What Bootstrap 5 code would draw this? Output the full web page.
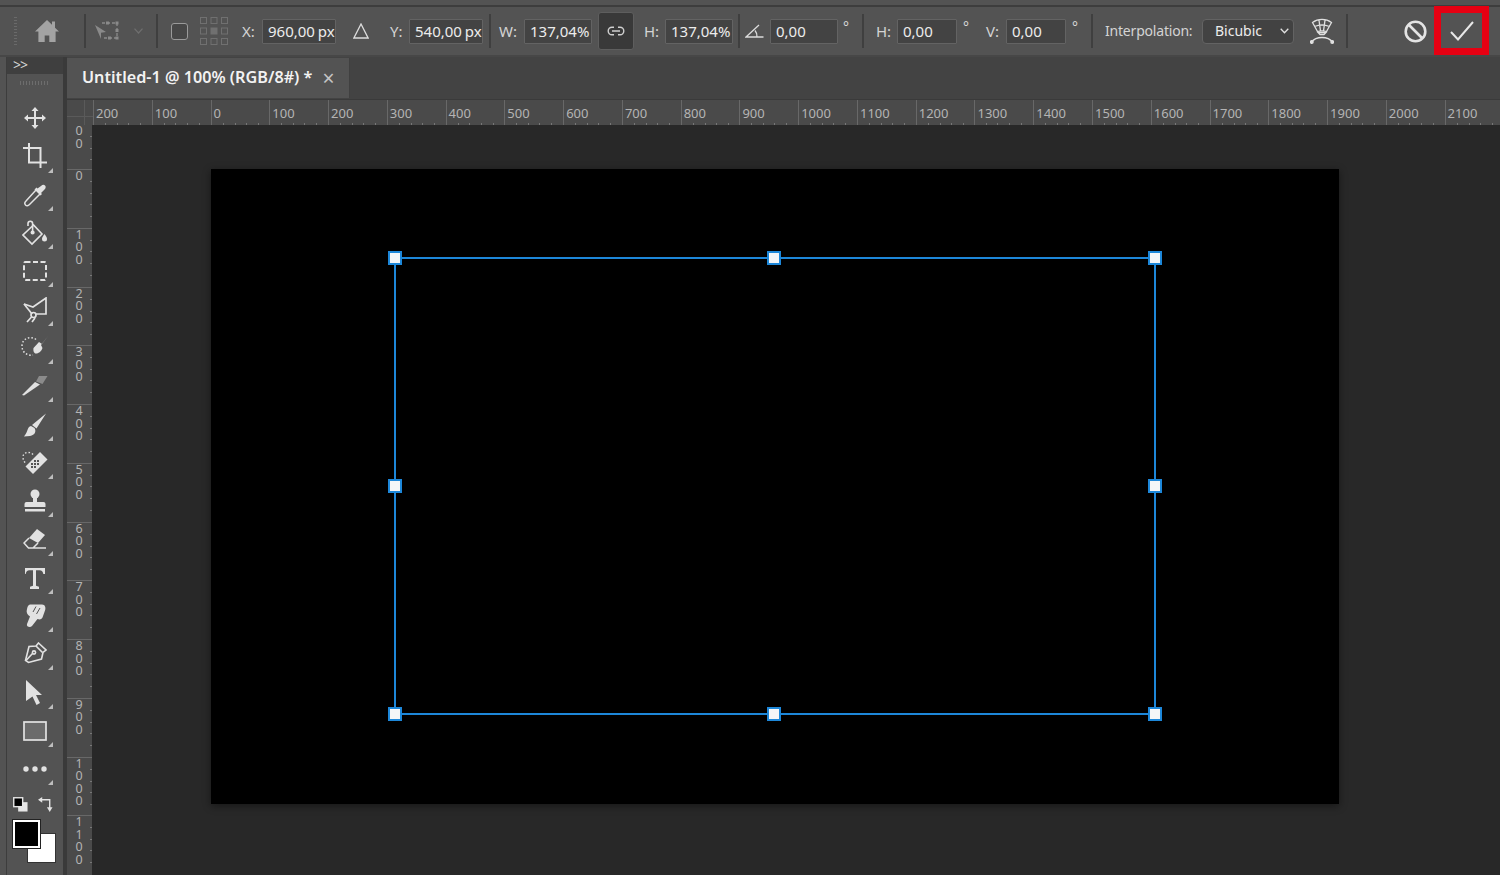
<!DOCTYPE html>
<html lang="en">
<head>
<meta charset="utf-8">
<title>Untitled-1 @ 100% (RGB/8#) *</title>
<link href="https://cdn.jsdelivr.net/npm/bootstrap@5.3.0/dist/css/bootstrap.min.css" rel="stylesheet">
<style>
html,body{height:875px;width:1500px;overflow:hidden}
body{background:#535353;color:#dedede;font-family:"Noto Sans","Open Sans",sans-serif;font-size:15px;line-height:1.2}
svg{display:block;flex:none}
.top-strip{height:7px;flex:none;background:#535353;border-bottom:2px solid #3d3d3d}
.optbar{height:50px;flex:none;padding-left:14px;background:#535353;border-bottom:2px solid #474747}
.grip{width:3px;height:28px;background:repeating-linear-gradient(#6a6a6a 0 1px,transparent 1px 3px)}
.sep{width:2px;height:34px;background:#3f3f3f;flex:none}
.field{height:25px;background:#434343;border:1px solid #636363;color:#ececec;padding:0 0 0 5px;display:flex;align-items:center;overflow:hidden;white-space:pre;word-spacing:-1px;flex:none;border-radius:1px}
.w74{width:74px}.w68{width:68px}.w60{width:60px}
.lbl{color:#d4d4d4;flex:none;white-space:nowrap}
.lx{width:14px}.ly{width:13px}.lw{width:19px}.lh{width:15px}
.lint{width:88px;font-size:14px;letter-spacing:-.2px}
.deg{flex:none;color:#d8d8d8;width:8px;margin-top:-8px;font-size:14px}
.linkbtn{width:36px;height:38px;background:#393939;border:1px solid #5e5e5e;border-radius:3px;flex:none}
.check{width:17px;height:17px;border:1.5px solid #9a9a9a;border-radius:3px;background:#474747;flex:none}
.selectbox{width:92px;height:25px;background:#424242;border:1px solid #636363;border-radius:4px;padding:0 4px 0 12px;flex:none;color:#ececec;font-size:14px}
.commit{width:55px;height:49px;border:7px solid #e60012;flex:none;margin-top:-1px}
.m5{margin-left:5px}.m6{margin-left:6px}.m7{margin-left:7px}.m8{margin-left:8px}.m9{margin-left:9px}.m10{margin-left:10px}.m11{margin-left:11px}.m12{margin-left:12px}.m13{margin-left:13px}.m14{margin-left:14px}.m15{margin-left:15px}.m16{margin-left:16px}.m17{margin-left:17px}.m18{margin-left:18px}.m21{margin-left:21px}.m25{margin-left:25px}.m56{margin-left:56px}
.edge{width:6px;background:#535353;flex:none}
.toolbar{width:57px;flex:none;background:#535353;border-left:1px solid #3d3d3d}
.collapse-strip{height:17px;background:#3f3f3f;color:#d5d5d5;font-size:14px;line-height:15px;padding-left:6px;letter-spacing:-1px}
.tool-grip{height:4px;width:30px;margin:7px 0 14px 13px;background:repeating-linear-gradient(90deg,#6d6d6d 0 1px,transparent 1px 3px)}
.tool{height:38.3px;position:relative;color:#e2e2e2;flex:none}
.tool.more::after{content:"";position:absolute;right:10px;bottom:3px;border-style:solid;border-width:0 0 5px 5px;border-color:transparent transparent #bdbdbd transparent}
.swaps{height:20px;margin-top:6px;padding-left:6px}
.colors{height:42px;width:42px;margin:6px 0 0 6px;position:relative}
.fg{width:27px;height:28px;background:#000;border:2px solid #fff;outline:1px solid #222;position:absolute;left:0;top:0;z-index:1}
.bg{width:27px;height:28px;background:#fff;outline:1px solid #333;position:absolute;left:15px;top:14px}
.gutter{width:4px;flex:none;background:#3a3a3a}
.doc{min-width:0;background:#282828}
.tabbar{height:43px;flex:none;background:#434343;padding-top:1px;border-bottom:1px solid #3a3a3a}
.tab{width:283px;height:40px;background:#535353;color:#f2f2f2;font-weight:600;font-size:16.2px;padding:0 0 0 15px;white-space:nowrap;border-right:1px solid #404040}
.tab .x{color:#c4c4c4;font-weight:400;font-size:21px;line-height:21px;margin-left:10px}
.hruler{height:25px;flex:none;background-color:#4a4a4a;color:#b4b4b4;font-size:13px;overflow:hidden}
.corner{width:26px;flex:none;background:linear-gradient(#5a5a5a,#5a5a5a) 17px 0/1px 100% no-repeat,linear-gradient(#5a5a5a,#5a5a5a) 0 16px/100% 1px no-repeat,#4a4a4a}
.hcell{flex:0 0 58.77px;border-left:1px solid #686868;padding:6px 0 0 2px;background:repeating-linear-gradient(90deg,transparent 0 10.75px,#777 10.75px 11.75px) 0 100%/100% 2px no-repeat}
.stage{min-height:0}
.vruler{width:25px;flex:none;background:#4a4a4a;color:#b4b4b4;font-size:12.5px;line-height:12.5px;text-align:center;overflow:hidden}
.vcell{height:58.77px;border-top:1px solid #686868;padding-right:1px;background:repeating-linear-gradient(180deg,transparent 0 10.75px,#777 10.75px 11.75px) 100% 0/2px 100% no-repeat}
.vcell.first{height:44px;border-top:0}
.canvas{background:#282828;padding:44px 0 0 119px;min-width:0}
.artboard{width:1128px;height:635px;background:#000;padding:89px 0 0 184px;box-shadow:0 2px 8px rgba(0,0,0,.45)}
.tbox{width:762px;height:458px;border:2px solid #1d87d9;position:relative;margin:-1px 0 0 -1px}
.h{position:absolute;width:14px;height:14px;background:#f4f6f8;border:2px solid #1d87d9}
.tl{left:-8px;top:-8px}.tc{left:371px;top:-8px}.tr{right:-8px;top:-8px}
.ml{left:-8px;top:220px}.mr{right:-8px;top:220px}
.bl{left:-8px;bottom:-8px}.bc{left:371px;bottom:-8px}.br{right:-8px;bottom:-8px}
</style>
</head>
<body class="d-flex flex-column">
<div class="top-strip"></div>
<header class="optbar d-flex align-items-center">
  <div class="grip"></div>
  <svg class="m18" width="24" height="22" viewBox="0 0 24 22"><path fill="#a3a3a3" d="M12 0 0 11.500h3.400V22h6.300v-6.600h4.600V22h6.300V11.500H24l-4-3.800V1.600h-3v3.200z"/></svg>
  <div class="sep m25"></div>
  <svg class="m9" width="24" height="22" viewBox="0 0 24 22" fill="none" stroke="#8a8a8a"><path stroke-dasharray="3 2" stroke-width="1.300" d="M7 3h15v15H7"/><path fill="#8a8a8a" stroke="none" d="M0 5l11 7-5 .7V19z"/><g fill="#8a8a8a" stroke="none"><rect x="11" y="1.500" width="3" height="3"/><rect x="20.500" y="1.500" width="3" height="3"/><rect x="20.500" y="9" width="3" height="3"/><rect x="20.500" y="16.500" width="3" height="3"/><rect x="13" y="16.500" width="3" height="3"/></g></svg>
  <svg class="m15" width="9" height="6" viewBox="0 0 9 6" fill="none" stroke="#6f6f6f" stroke-width="1.200"><path d="M.5.7 4.500 5 8.500.7"/></svg>
  <div class="sep m13"></div>
  <div class="check m13"></div>
  <svg class="m12" width="28" height="28" viewBox="0 0 28 28" fill="none" stroke="#707070"><rect x=".5" y=".5" width="6" height="6"/><rect x="11" y=".5" width="6" height="6"/><rect x="21.500" y=".5" width="6" height="6"/><rect x=".5" y="11" width="6" height="6"/><rect x="11" y="11" width="6" height="6" fill="#707070"/><rect x="21.500" y="11" width="6" height="6"/><rect x=".5" y="21.500" width="6" height="6"/><rect x="11" y="21.500" width="6" height="6"/><rect x="21.500" y="21.500" width="6" height="6"/></svg>
  <span class="lbl lx m14">X:</span>
  <div class="field w74 m6">960,00 px</div>
  <svg class="m17" width="16" height="16" viewBox="0 0 16 16" fill="none" stroke="#dcdcdc" stroke-width="1.300"><path d="M8 1 .9 15h14.200z"/></svg>
  <span class="lbl ly m21">Y:</span>
  <div class="field w74 m6">540,00 px</div>
  <div class="sep m6"></div>
  <span class="lbl lw m8">W:</span>
  <div class="field w68 m6">137,04%</div>
  <div class="linkbtn m6 d-flex align-items-center justify-content-center"><svg width="18" height="10" viewBox="0 0 18 10" fill="none" stroke="#d0d0d0" stroke-width="1.400"><path d="M7 1.200H5a3.800 3.800 0 0 0 0 7.600h2M11 1.200h2a3.800 3.800 0 0 1 0 7.600h-2M5 5h8"/></svg></div>
  <span class="lbl lh m10">H:</span>
  <div class="field w68 m6">137,04%</div>
  <div class="sep m5"></div>
  <svg class="m5" width="19" height="14" viewBox="0 0 19 14" fill="none" stroke="#dcdcdc" stroke-width="1.300"><path d="M18.500 13H1L14 1M10 6.500c1.500 1.700 2 4 2 6.500"/></svg>
  <div class="field w68 m6">0,00</div>
  <span class="deg m5">°</span>
  <div class="sep m11"></div>
  <span class="lbl lh m12">H:</span>
  <div class="field w60 m6">0,00</div>
  <span class="deg m6">°</span>
  <span class="lbl lh m15">V:</span>
  <div class="field w60 m5">0,00</div>
  <span class="deg m6">°</span>
  <div class="sep m11"></div>
  <span class="lbl lint m12">Interpolation:</span>
  <div class="selectbox m9 d-flex align-items-center justify-content-between"><span>Bicubic</span><svg width="9" height="6" viewBox="0 0 9 6" fill="none" stroke="#e0e0e0" stroke-width="1.300"><path d="M.7.8 4.500 4.800 8.300.8"/></svg></div>
  <svg class="m16" width="24" height="26" viewBox="0 0 24 26" fill="none" stroke="#e0e0e0" stroke-width="1.300"><path d="M2.500 4.500C8 .3 16 .3 21.500 4.500L16.500 13.500C14 12.700 10 12.700 7.500 13.500zM4.500 8.500c5-2 10-2 15 0M9 2.200 10.500 13M15 2.200 13.500 13"/><path d="M8 14.500h8l-2 2h-4zM1.500 24C6 18 18 18 22.500 24"/><circle cx="1.800" cy="24" r="1.300" fill="#e0e0e0"/><circle cx="22.200" cy="24" r="1.300" fill="#e0e0e0"/></svg>
  <div class="sep m12"></div>
  <svg class="m56" width="23" height="23" viewBox="0 0 23 23" fill="none" stroke="#e4e4e4" stroke-width="2.600"><circle cx="11.500" cy="11.500" r="9.800"/><path d="M4.500 4.500 18.500 18.500"/></svg>
  <div class="commit m7 d-flex align-items-center justify-content-center"><svg width="24" height="20" viewBox="0 0 24 20" fill="none" stroke="#e8e8e8" stroke-width="2"><path d="M1 11l7 7.500L23 1"/></svg></div>
</header>
<main class="d-flex flex-grow-1 stage">
  <div class="edge"></div>
  <nav class="toolbar d-flex flex-column">
    <div class="collapse-strip">&gt;&gt;</div>
    <div class="tool-grip"></div>
    <div class="tool d-flex align-items-center justify-content-center"><svg width="24" height="24" viewBox="0 0 24 24" fill="#e2e2e2"><path d="M12 1l3.500 4h-2.500v6h6V8.500l4 3.500-4 3.500V13h-6v6h2.500L12 23l-3.500-4H11v-6H5v2.500L1 12l4-3.500V11h6V5H8.500z"/></svg></div>
    <div class="tool more d-flex align-items-center justify-content-center"><svg width="26" height="26" viewBox="0 0 26 26" fill="none" stroke="#e2e2e2" stroke-width="2"><path d="M1 5h17.500V25M7 0v19.500h18"/></svg></div>
    <div class="tool more d-flex align-items-center justify-content-center"><svg width="24" height="24" viewBox="0 0 24 24" fill="none" stroke="#e2e2e2" stroke-width="1.500"><path d="M13 7 3 18c-1.500 1.500-1.500 3 -.5 4s2.500 1 4-.5L17 11"/><path fill="#e2e2e2" stroke="none" d="M11.500 6.500l6 6 1.500-1.500-1-1 3.500-3.500c1.500-1.500 1.500-3 .5-4s-2.500-1-4 .5L14.500 5.500l-1-1z"/></svg></div>
    <div class="tool more d-flex align-items-center justify-content-center"><svg width="26" height="26" viewBox="0 0 26 26" fill="none" stroke="#e2e2e2" stroke-width="1.600"><path d="M11.500 5 1 15l9 9 10-10z"/><path d="M6 6V3.500a2.300 2.300 0 0 1 4.600 0V12"/><circle cx="10.600" cy="12.500" r="1.300" fill="#e2e2e2"/><path fill="#e2e2e2" stroke="none" d="M22.500 14c1.500 2 2.500 3.500 2.500 5a2.500 2.500 0 0 1-5 0c0-1.500 1-3 2.500-5z"/></svg></div>
    <div class="tool more d-flex align-items-center justify-content-center"><svg width="24" height="20" viewBox="0 0 24 20" fill="none" stroke="#e2e2e2" stroke-width="2" stroke-dasharray="5 2.500"><rect x="1" y="1" width="22" height="18" rx="1.500"/></svg></div>
    <div class="tool more d-flex align-items-center justify-content-center"><svg width="24" height="26" viewBox="0 0 24 26" fill="none" stroke="#e2e2e2" stroke-width="1.700"><path d="M1 7l9 3L23 1v16L13 17"/><path d="M1 7l8 10"/><circle cx="10.500" cy="18" r="2.500"/><path d="M8.500 20 4 25M12 21l-3 4"/></svg></div>
    <div class="tool more d-flex align-items-center justify-content-center"><svg width="28" height="24" viewBox="0 0 28 24" fill="none" stroke="#e2e2e2" stroke-width="1.500"><path stroke-dasharray="1.500 2" d="M15 3.500C10 -.5 1 2 1 10c0 7 6 10 11 9"/><path fill="#e2e2e2" stroke="none" d="M27 0 21 8l-3-2-5.500 6c-.5 3 .5 5.500 2.500 5.500 3 0 5.500-2.500 6.500-5.500l-1.500-3z"/></svg></div>
    <div class="tool more d-flex align-items-center justify-content-center"><svg width="26" height="20" viewBox="0 0 26 20" fill="#e2e2e2"><path d="M0 19 13 6l5 2.500L2 19.500z"/><path fill="#8b8b8b" d="M17 0h8.500l-5 8L14 5.500z"/></svg></div>
    <div class="tool more d-flex align-items-center justify-content-center"><svg width="24" height="24" viewBox="0 0 24 24" fill="#e2e2e2"><path d="M23 .500 13.500 15.500l-4.500-3.500zM8 13c-4 1-2.500 5-7 10.500l6-.5c5-1 6.500-4.500 4.500-8z"/></svg></div>
    <div class="tool more d-flex align-items-center justify-content-center"><svg width="26" height="24" viewBox="0 0 26 24"><path fill="none" stroke="#e2e2e2" stroke-width="1.400" stroke-dasharray="1.500 2" d="M11 3.500C8 0 1 1 1 6c0 3 1 5 3 6"/><path fill="#e2e2e2" d="M18 1l7.500 7.500L11 23l-7.500-7.500z"/><g fill="#555"><rect x="12" y="9" width="2" height="2"/><rect x="15" y="9" width="2" height="2"/><rect x="12" y="12" width="2" height="2"/><rect x="15" y="12" width="2" height="2"/><rect x="9" y="12" width="2" height="2"/><rect x="9" y="15" width="2" height="2"/><rect x="12" y="15" width="2" height="2"/></g></svg></div>
    <div class="tool more d-flex align-items-center justify-content-center"><svg width="22" height="24" viewBox="0 0 22 24" fill="#e2e2e2"><circle cx="11" cy="5" r="4.500"/><path d="M9 8h4v5h6.500a2 2 0 0 1 2 2v3H.500v-3a2 2 0 0 1 2-2H9zM1 20h20v2.500H1z"/></svg></div>
    <div class="tool more d-flex align-items-center justify-content-center"><svg width="24" height="22" viewBox="0 0 24 22"><path fill="#e2e2e2" d="M14 1l8 6-7 8-9-5z"/><path fill="none" stroke="#e2e2e2" stroke-width="1.500" d="M6 10l-5 5 4.500 5H23M15 15l-5 5"/></svg></div>
    <div class="tool more d-flex align-items-center justify-content-center"><svg width="22" height="22" viewBox="0 0 22 22" fill="#e2e2e2"><path d="M1 1h20v6h-1.700c-.3-2.400-1.500-3.800-3.800-3.800h-3.500v15.600l3 1V22H6v-2.200l3-1V3.200H5.500C3.200 3.200 2 4.600 1.700 7H1z"/></svg></div>
    <div class="tool more d-flex align-items-center justify-content-center"><svg width="22" height="24" viewBox="0 0 22 24" fill="#e2e2e2"><path d="M6 .500h12c3 0 4 3 3 6l-2.500 7c-1 2-3 2.500-5 1.500L8 22c-1.500 2-6 1-5-2l3-7.500C3 11 2 8 3 5 3.700 2 4.500 1 6 .500z"/><path fill="none" stroke="#555" stroke-width="1" d="M12 2.500 9 8M16 4l-3.500 6"/></svg></div>
    <div class="tool more d-flex align-items-center justify-content-center"><svg width="24" height="24" viewBox="0 0 24 24" fill="none" stroke="#e2e2e2" stroke-width="1.600"><path d="M15.500 1 23 8l-3 2.500-1.500 6.500-13 3.500-3-2 3.500-14L13 4z"/><path d="M13 4l6.500 6.500M3 18.500l6.500-7"/><circle cx="11" cy="10.500" r="1.600"/></svg></div>
    <div class="tool more d-flex align-items-center justify-content-center"><svg width="18" height="26" viewBox="0 0 18 26" fill="#e2e2e2"><path d="M0 0 16 15h-6l4 8-3.500 2-4-8.500L0 21z"/></svg></div>
    <div class="tool more d-flex align-items-center justify-content-center"><svg width="24" height="20" viewBox="0 0 24 20"><rect x="1" y="1" width="22" height="18" fill="#6b6b6b" stroke="#e2e2e2" stroke-width="1.700"/></svg></div>
    <div class="tool more d-flex align-items-center justify-content-center"><svg width="24" height="6" viewBox="0 0 24 6" fill="#e2e2e2"><circle cx="3" cy="3" r="2.700"/><circle cx="12" cy="3" r="2.700"/><circle cx="21" cy="3" r="2.700"/></svg></div>
    <div class="swaps d-flex align-items-center">
      <svg width="15" height="15" viewBox="0 0 16 16"><rect x="5.500" y="5.500" width="10" height="10" fill="#e6e6e6"/><rect x=".8" y=".8" width="9.500" height="9.500" fill="#000" stroke="#e6e6e6" stroke-width="1.500"/></svg>
      <svg class="m10" width="15" height="15" viewBox="0 0 16 16" fill="none" stroke="#e2e2e2" stroke-width="1.500"><path d="M4 3h8.500v9"/><path fill="#e2e2e2" stroke="none" d="M4.500 0v6L0 3zM9.500 11h6L12.500 16z"/></svg>
    </div>
    <div class="colors"><div class="fg"></div><div class="bg"></div></div>
  </nav>
  <div class="gutter"></div>
  <section class="doc d-flex flex-column flex-grow-1">
    <div class="tabbar d-flex"><div class="tab d-flex align-items-center">Untitled-1 @ 100% (RGB/8#) *<span class="x">×</span></div></div>
    <div class="hruler d-flex">
      <div class="corner"></div>
      <div class="hcell">200</div><div class="hcell">100</div><div class="hcell">0</div><div class="hcell">100</div><div class="hcell">200</div><div class="hcell">300</div><div class="hcell">400</div><div class="hcell">500</div><div class="hcell">600</div><div class="hcell">700</div><div class="hcell">800</div><div class="hcell">900</div><div class="hcell">1000</div><div class="hcell">1100</div><div class="hcell">1200</div><div class="hcell">1300</div><div class="hcell">1400</div><div class="hcell">1500</div><div class="hcell">1600</div><div class="hcell">1700</div><div class="hcell">1800</div><div class="hcell">1900</div><div class="hcell">2000</div><div class="hcell">2100</div>
    </div>
    <div class="d-flex flex-grow-1 stage">
      <div class="vruler">
        <div class="vcell first">0<br>0</div>
        <div class="vcell">0</div>
        <div class="vcell">1<br>0<br>0</div>
        <div class="vcell">2<br>0<br>0</div>
        <div class="vcell">3<br>0<br>0</div>
        <div class="vcell">4<br>0<br>0</div>
        <div class="vcell">5<br>0<br>0</div>
        <div class="vcell">6<br>0<br>0</div>
        <div class="vcell">7<br>0<br>0</div>
        <div class="vcell">8<br>0<br>0</div>
        <div class="vcell">9<br>0<br>0</div>
        <div class="vcell">1<br>0<br>0<br>0</div>
        <div class="vcell">1<br>1<br>0<br>0</div>
      </div>
      <div class="canvas flex-grow-1">
        <div class="artboard">
          <div class="tbox">
            <i class="h tl"></i><i class="h tc"></i><i class="h tr"></i><i class="h ml"></i><i class="h mr"></i><i class="h bl"></i><i class="h bc"></i><i class="h br"></i>
          </div>
        </div>
      </div>
    </div>
  </section>
</main>
<script src="https://cdn.jsdelivr.net/npm/bootstrap@5.3.0/dist/js/bootstrap.bundle.min.js"></script>
</body>
</html>
